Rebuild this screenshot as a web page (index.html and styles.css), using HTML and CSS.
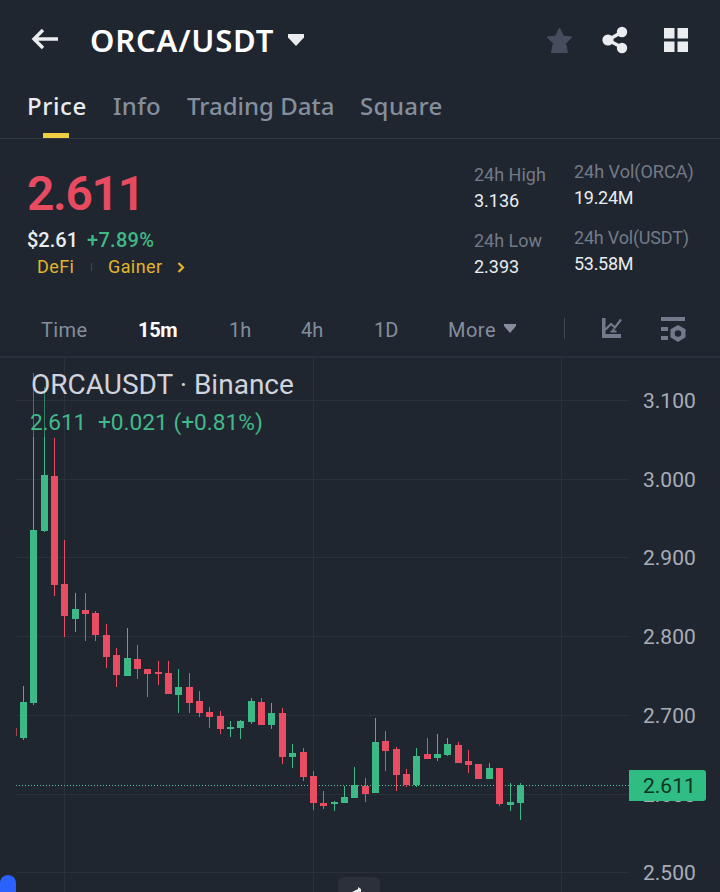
FILE: index.html
```html
<!DOCTYPE html>
<html lang="en">
<head>
<meta charset="utf-8">
<title>ORCA/USDT</title>
<link rel="stylesheet" href="styles.css">
</head>
<body>
<header class="topbar">
  <svg class="back" width="28" height="22" viewBox="0 0 28 22"><path d="M27 11H3M12 2L3 11l9 9" fill="none" stroke="#eaecef" stroke-width="3.4"/></svg>
  <h1 class="pair">ORCA/USDT</h1>
  <svg class="caret" width="16" height="12" viewBox="0 0 16 12"><path d="M0 0h16v3.5L8 12 0 3.5z" fill="#eaecef"/></svg>
  <div class="actions">
    <svg width="28" height="28" viewBox="0 0 28 28"><path d="M14.500 2l3.800 8 8.700 1.100-6.400 6.200 1.900 9.200H6.500l1.900-9.200L2 11.100 10.700 10z" fill="#474d5c" stroke="#474d5c" stroke-linejoin="round"/></svg>
    <svg width="28" height="28" viewBox="0 0 28 28"><path d="M21 6L7 14l14 7.500" fill="none" stroke="#eaecef" stroke-width="3.400"/><g fill="#eaecef"><circle cx="21" cy="6" r="5.200"/><circle cx="7" cy="14" r="5.600"/><circle cx="21" cy="22" r="5.200"/></g></svg>
    <svg width="24" height="24" viewBox="0 0 24 24"><path d="M0 0h10.500v10.500H0zM13.500 0H24v10.500H13.500zM0 13.500h10.500V24H0zM13.500 13.500H24V24H13.500z" fill="#eaecef"/></svg>
  </div>
</header>
<nav class="tabs">
  <a class="tab tab-price active">Price</a>
  <a class="tab tab-info">Info</a>
  <a class="tab tab-data">Trading Data</a>
  <a class="tab tab-square">Square</a>
</nav>
<section class="summary">
  <div class="quote">
    <div class="last">2.611</div>
    <div class="change"><span class="usd">$2.61</span><span class="pct">+7.89%</span></div>
    <div class="tags"><span class="defi">DeFi</span><i></i><span class="gainer">Gainer</span>
      <svg width="8" height="11" viewBox="0 0 8 11"><path d="M1.500 1l4.500 4.500L1.500 10" fill="none" stroke="#e0b42c" stroke-width="2.200"/></svg>
    </div>
  </div>
  <dl class="stats stats-price">
    <dt class="high">24h High</dt><dd>3.136</dd>
    <dt class="low">24h Low</dt><dd>2.393</dd>
  </dl>
  <dl class="stats stats-volume">
    <dt class="orca">24h Vol(ORCA)</dt><dd class="vol">19.24M</dd>
    <dt class="usdt">24h Vol(USDT)</dt><dd class="vol">53.58M</dd>
  </dl>
</section>
<nav class="intervals">
  <span class="iv iv-time">Time</span>
  <span class="iv iv-15m">15m</span>
  <span class="iv iv-1h">1h</span>
  <span class="iv iv-4h">4h</span>
  <span class="iv iv-1d">1D</span>
  <span class="iv iv-more">More</span>
  <svg class="more-caret" width="12" height="9" viewBox="0 0 12 9"><path d="M0 0h12v2L6 9 0 2z" fill="#848e9c"/></svg>
  <i class="rule"></i>
  <svg class="line-tool" width="20" height="20" viewBox="0 0 20 20"><path d="M3 12l6-6 4 3.500 6-8M8.500 13.500h6M11.500 10.500v3" fill="none" stroke="#737a8b" stroke-width="2.200"/><path d="M0 0h3.500v16H19v4H0z" fill="#737a8b"/></svg>
  <svg class="settings" width="25" height="25" viewBox="0 0 25 25"><path d="M0 0h24v4H0zM0 10h7v4H0zM0 19h7v4H0z" fill="#737a8b"/><path fill-rule="evenodd" d="M17 8l7.500 4.300v8L17 25l-7.500-4.700v-8zM17 13.200a3.300 3.300 0 1 0 0 6.600 3.300 3.300 0 0 0 0-6.600z" fill="#737a8b"/></svg>
</nav>
<main class="chart">
  <svg id="plot" width="720" height="536" viewBox="0 356 720 536"></svg>
  <div class="legend">
    <div class="symbol">ORCAUSDT · Binance</div>
    <div class="values"><span class="close">2.611</span><span class="delta">+0.021 (+0.81%)</span></div>
  </div>
  <div class="price-tag">2.611</div>
  <div class="blue-handle"></div>
  <div class="expand"><svg width="14" height="8" viewBox="0 0 14 8"><path d="M0 5l6-3V0l3 2v4H0z" fill="#eaecef"/></svg></div>
</main>
<script src="script.js"></script>
</body>
</html>
```
FILE: styles.css
```css
* { box-sizing: border-box; }
body { margin: 0; width: 720px; height: 892px; overflow: hidden; background: #202630; color: #eaecef; font-family: Roboto, "Liberation Sans", sans-serif; }
svg { display: block; flex: none; }
span, a, dt, dd { white-space: nowrap; }
.topbar { display: flex; align-items: center; height: 81px; padding-left: 31px; }
.back { margin-top: -3px; }
.pair { margin: -2px 0 0 31px; width: 184px; font: 650 31px/40px "Noto Sans", sans-serif; letter-spacing: .8px; white-space: nowrap; color: #fff; }
.caret { margin: -2px 0 0 14px; }
.actions { display: flex; align-items: center; margin-left: 241px; gap: 28px; margin-top: -2px; }
.actions svg:last-child { margin-left: 7px; }
.tabs { display: flex; height: 58px; border-bottom: 1px solid #333943; padding-left: 27px; }
.tab { position: relative; height: 57px; font: 500 24px/49px "Noto Sans", sans-serif; color: #848e9c; }
.tab-price { width: 86px; color: #eaecef; letter-spacing: .6px; }
.tab.active::after { content: ""; position: absolute; left: 16px; bottom: 0; width: 26px; height: 5px; background: #f0cf45; }
.tab-info { width: 74px; letter-spacing: .3px; }
.tab-data { width: 173px; }
.tab-square { letter-spacing: .4px; }
.summary { display: flex; height: 165px; padding-left: 27px; }
.quote { width: 447px; padding-top: 29px; }
.last { height: 52px; font-size: 48px; line-height: 52px; font-weight: 600; color: #e84b60; letter-spacing: -1.300px; }
.change { display: flex; height: 32px; margin-top: 4px; font-size: 20px; line-height: 32px; font-weight: 500; }
.usd { width: 60px; }
.pct { color: #3fb984; letter-spacing: .3px; }
.tags { display: flex; align-items: center; height: 22px; padding-left: 10px; font-size: 18px; line-height: 20px; color: #e0b42c; letter-spacing: .4px; }
.defi { width: 54px; }
.tags i { width: 1px; height: 8px; background: #414854; margin-right: 16px; }
.gainer { width: 69px; }
.stats { margin: 0; font-size: 18px; line-height: 26px; }
.stats dt { color: #737a87; }
.stats dd { margin: 0 0 14px; }
.usdt { letter-spacing: -.200px; }
.stats-price { width: 100px; padding-top: 23px; }
.stats-volume { padding-top: 20px; }
.stats-volume dd { letter-spacing: -.3px; }
.intervals { display: flex; align-items: center; height: 52px; padding-left: 41px; font-size: 20px; color: #848e9c; }
.iv-time { width: 97px; letter-spacing: .4px; }
.iv-15m { width: 91px; color: #fff; font-weight: 700; letter-spacing: -.3px; }
.iv-1h { width: 72px; }
.iv-4h { width: 73px; }
.iv-1d { width: 74px; }
.iv-more { width: 56px; letter-spacing: .5px; }
.more-caret { margin-top: -4px; }
.rule { width: 1px; height: 21px; margin: -3px 0 0 48px; background: #414854; }
.line-tool { margin-left: 37px; margin-top: -4px; }
.settings { margin-left: 39px; margin-top: -2px; }
.chart { position: relative; height: 536px; }
.axis { font: 21px Roboto, sans-serif; fill: #a8adb7; }
.legend { position: absolute; left: 30px; top: 13px; width: 270px; height: 70px; white-space: nowrap; }
.symbol { padding-left: 1px; font-size: 28px; line-height: 32px; color: #d0d3dc; }
.values { display: flex; margin-top: 6px; font-size: 22.700px; line-height: 32px; color: #42b98a; }
.close { width: 68px; letter-spacing: -.2px; }
.price-tag { position: absolute; left: 629px; top: 414px; width: 77px; height: 31px; padding-left: 14px; border-radius: 0 3px 3px 0; background: #30bd83; color: #0b351f; font-size: 21px; line-height: 33px; }
.blue-handle { position: absolute; left: 0; top: 519px; width: 16px; height: 30px; border-radius: 8px; background: #2962ff; }
.expand { position: absolute; left: 338px; top: 521px; width: 42px; height: 30px; border-radius: 6px; background: #2c303b; padding: 10px 0 0 14px; }
```
FILE: script.js
```js
// Candle: centre x, wick top, wick bottom, body top, body bottom, direction
const candles = [
  [23,686,740,702,738,1],[33,373,705,530,703,1],[44,387,532,475,531,1],[54,438,596,476,585,0],
  [64,540,637,584,616,0],[75,593,632,609,619,1],[85,593,641,610,614,0],[95,611,641,613,635,0],
  [106,624,668,635,657,0],[116,648,687,655,675,0],[127,628,676,658,676,1],[137,645,679,659,669,0],
  [147,669,697,669,674,0],[158,661,685,672,674,0],[168,661,694,673,694,0],[178,669,713,687,695,1],
  [189,673,713,687,703,0],[199,691,717,701,713,0],[209,707,728,712,717,0],[220,711,734,716,729,0],
  [230,721,737,727,729,1],[240,720,739,721,728,1],[251,698,724,701,722,1],[261,698,725,702,725,0],
  [271,703,729,713,725,1],[282,708,764,713,757,0],[292,744,768,753,757,1],[303,748,781,752,777,0],
  [313,771,810,776,803,0],[323,791,809,803,806,0],[334,801,811,802,804,1],[344,786,803,797,803,1],
  [354,767,798,785,798,1],[365,778,802,786,794,0],[375,718,793,742,793,1],[385,731,771,741,751,0],
  [396,747,791,749,775,0],[406,769,787,774,785,0],[416,748,787,756,785,1],[427,738,759,754,759,0],
  [437,734,761,754,758,1],[447,738,756,744,755,1],[458,742,763,745,763,0],[468,750,773,761,765,0],
  [478,764,779,764,779,0],[489,763,779,768,779,1],[499,768,806,768,804,0],[510,783,811,802,805,1],
  [520,783,820,785,803,1]
];
const levels = [[400,"3.100"],[479,"3.000"],[557,"2.900"],[636,"2.800"],[715,"2.700"],[794,"2.600"],[872,"2.500"]];
const rect = (x, y, w, h, f) => `<rect x="${x}" y="${y}" width="${w}" height="${h}" fill="${f}"/>`;
let out = rect(0, 355, 720, 3, "#2a303b");
for (const x of [64, 313, 561]) out += rect(x, 358, 1, 534, "#2b313b");
for (const [y, label] of levels) {
  out += rect(16, y, 613, 1, "#2b313b");
  out += `<text class="axis" x="643" y="${y + 8}">${label}</text>`;
}
out += `<path d="M16 785.5H629" stroke="#55c79c" stroke-dasharray="1 2"/>`;
out += rect(16, 728, 1, 8, "#a44855");
for (const [x, hi, lo, top, bottom, up] of candles) {
  const color = up ? "#3db988" : "#e84d61";
  out += rect(x, hi, 1, lo - hi, color) + rect(x - 3, top, 7, bottom - top, color);
}
// Dim the wicks that run behind the legend
out += rect(33, 372, 1, 65, "rgba(32,38,48,.4)") + rect(44, 372, 1, 65, "rgba(32,38,48,.4)");
document.getElementById("plot").innerHTML = out;
```
